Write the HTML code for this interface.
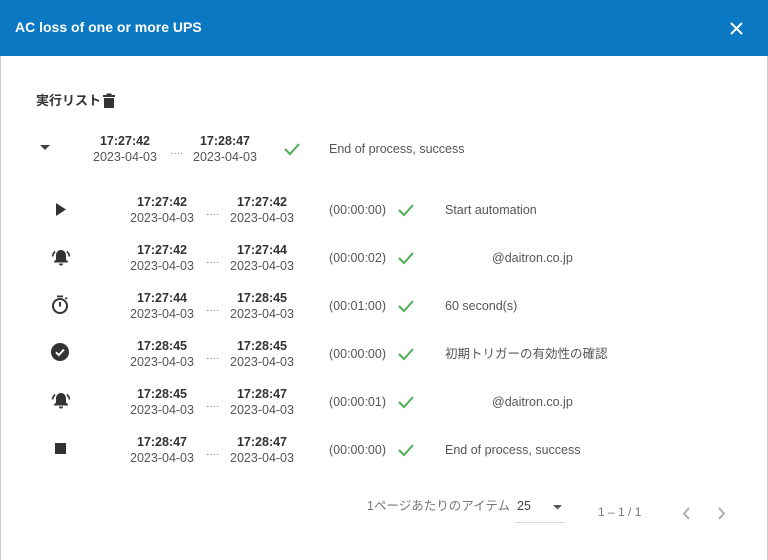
<!DOCTYPE html>
<html><head><meta charset="utf-8"><style>
*{margin:0;padding:0;box-sizing:border-box}
body{width:768px;height:560px;background:#fff;font-family:"Liberation Sans","Noto Sans CJK JP",sans-serif;position:relative;overflow:hidden;color:#444}
.hdr{position:absolute;left:0;top:0;width:768px;height:56px;background:#0a78c2;}
.hdr .t{position:absolute;left:15px;top:19px;color:#fff;font-size:14px;font-weight:bold}
.brd{position:absolute;top:56px;bottom:0;width:1px;background:#ccc}
.a{position:absolute;white-space:nowrap}
.tm{font-size:12.5px;font-weight:bold;color:#333;text-align:center;width:90px;line-height:15px}
.dt{font-size:12.5px;color:#555;text-align:center;width:90px;line-height:15px}
.dots{font-size:10px;color:#777}
.tx{font-size:12.5px;color:#555;line-height:16px}
</style></head><body>
<div class="hdr"><div class="t">AC loss of one or more UPS</div>
<svg class="a" style="left:729px;top:21px" width="15" height="15" viewBox="0 0 15 15"><path d="M2 2L13 13M13 2L2 13" stroke="#fff" stroke-width="2"/></svg></div>
<div class="brd" style="left:0"></div><div class="brd" style="right:0"></div>
<div class="a" style="left:36px;top:93px;font-size:13px;font-weight:bold;color:#333;line-height:16px">実行リスト</div>
<svg class="a" style="left:102px;top:93px" width="14" height="16" viewBox="0 0 14 16"><path d="M1 2h12v2H1zM4.5 0.5h5v2h-5zM2 5h10v10H2z" fill="#333"/></svg>
<svg class="a" style="left:40px;top:145px" width="10" height="6"><path d="M0 0h10L5 5z" fill="#444"/></svg>
<div id="rows"></div>
<script>
function row(y,t1,t2,x1,x2,dots,chk,txt,tx,dur){
 let h='';
 h+=`<div class="a tm" style="left:${x1-45}px;top:${y-15}px">${t1}</div><div class="a dt" style="left:${x1-45}px;top:${y+1}px">2023-04-03</div>`;
 h+=`<div class="a tm" style="left:${x2-45}px;top:${y-15}px">${t2}</div><div class="a dt" style="left:${x2-45}px;top:${y+1}px">2023-04-03</div>`;
 h+=`<div class="a dots" style="left:${dots-6}px;top:${y-1}px">····</div>`;
 h+=`<svg class="a" style="left:${chk-9}px;top:${y-7}px" width="18" height="14"><path d="M2 7l5 5L16 2" stroke="#4caf50" stroke-width="2" fill="none"/></svg>`;
 if(dur)h+=`<div class="a tx" style="left:329px;top:${y-8}px">${dur}</div>`;
 h+=`<div class="a tx" style="left:${tx}px;top:${y-8}px">${txt}</div>`;
 return h;
}
let h=row(149,'17:27:42','17:28:47',125,225,176,292,'End of process, success',329);
const d=[['17:27:42','17:27:42','(00:00:00)','Start automation',445],
['17:27:42','17:27:44','(00:00:02)','@daitron.co.jp',492],
['17:27:44','17:28:45','(00:01:00)','60 second(s)',445],
['17:28:45','17:28:45','(00:00:00)','初期トリガーの有効性の確認',445],
['17:28:45','17:28:47','(00:00:01)','@daitron.co.jp',492],
['17:28:47','17:28:47','(00:00:00)','End of process, success',445]];
d.forEach((r,i)=>{h+=row(210+i*48,r[0],r[1],162,262,212,406,r[3],r[4],r[2]);});
document.getElementById('rows').innerHTML=h;
</script>
<svg class="a" style="left:55px;top:203px" width="12" height="13"><path d="M1 0L11 6.5L1 13z" fill="#333"/></svg>
<svg class="a" style="left:51px;top:248px" width="20" height="18" viewBox="0 0 20 18"><path d="M10 2c-3 0-5 2.5-5 5.5v4L3 13.5v1h14v-1l-2-2v-4C15 4.5 13 2 10 2zM8 15.5h4a2 2 0 0 1-4 0z" fill="#333"/><path d="M4 3.5C2.5 5 1.8 6.5 1.5 8.5M16 3.5c1.5 1.5 2.2 3 2.5 5" stroke="#333" stroke-width="1.6" fill="none"/></svg>
<svg class="a" style="left:51px;top:295px" width="18" height="19" viewBox="0 0 18 19"><rect x="6" y="0.5" width="6" height="1.8" fill="#333"/><circle cx="9" cy="11" r="7" stroke="#333" stroke-width="2" fill="none"/><path d="M9 7v4.5" stroke="#333" stroke-width="2"/><path d="M14.5 4l1.5-1.5" stroke="#333" stroke-width="1.8"/></svg>
<svg class="a" style="left:51px;top:343px" width="18" height="18"><circle cx="9" cy="9" r="9" fill="#333"/><path d="M5 9.3l2.8 2.8L13 6.5" stroke="#fff" stroke-width="2" fill="none"/></svg>
<svg class="a" style="left:51px;top:391px" width="20" height="18" viewBox="0 0 20 18"><path d="M10 2c-3 0-5 2.5-5 5.5v4L3 13.5v1h14v-1l-2-2v-4C15 4.5 13 2 10 2zM8 15.5h4a2 2 0 0 1-4 0z" fill="#333"/><path d="M4 3.5C2.5 5 1.8 6.5 1.5 8.5M16 3.5c1.5 1.5 2.2 3 2.5 5" stroke="#333" stroke-width="1.6" fill="none"/></svg>
<div class="a" style="left:55px;top:443px;width:11px;height:11px;background:#333"></div>
<div class="a" style="left:367px;top:498px;font-size:12.5px;color:#777;line-height:16px">1ページあたりのアイテム</div>
<div class="a" style="left:517px;top:498px;font-size:12.5px;color:#444;line-height:16px">25</div>
<svg class="a" style="left:553px;top:505px" width="9" height="5"><path d="M0 0h9L4.5 4.5z" fill="#555"/></svg>
<div class="a" style="left:515px;top:522px;width:50px;height:1px;background:#ddd"></div>
<div class="a" style="left:598px;top:505px;font-size:12px;color:#777">1 – 1 / 1</div>
<svg class="a" style="left:682px;top:507px" width="8" height="13"><path d="M7 1L2 6.5L7 12" stroke="#aaa" stroke-width="1.8" fill="none"/></svg>
<svg class="a" style="left:718px;top:507px" width="8" height="13"><path d="M1 1L6 6.5L1 12" stroke="#aaa" stroke-width="1.8" fill="none"/></svg>
</body></html>
